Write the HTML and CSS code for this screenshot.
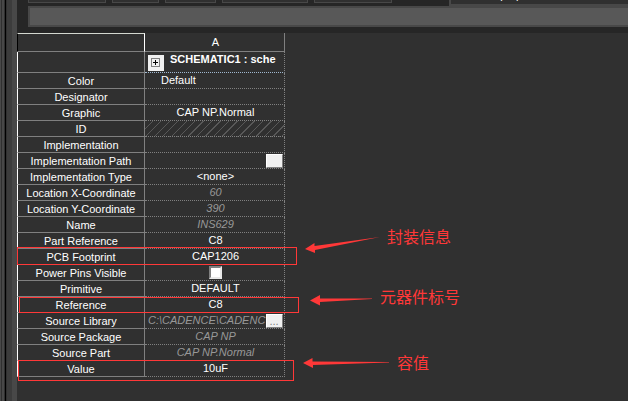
FILE: index.html
```html
<!DOCTYPE html>
<html lang="zh-CN">
<head>
<meta charset="utf-8">
<title>Property Editor</title>
<link rel="stylesheet" href="styles.css">
</head>
<body>
<div class="window">
  <div class="gutter"></div>
  <main class="editor">
    <header class="toolbar">
      <button class="tool tool-new" type="button" aria-label="New Property"></button>
      <button class="tool tool-apply" type="button" aria-label="Apply"></button>
      <button class="tool tool-display" type="button" aria-label="Display"></button>
      <button class="tool tool-delete" type="button" aria-label="Delete Property"></button>
      <button class="tool tool-pivot" type="button" aria-label="Pivot"></button>
      <select class="filter" aria-label="Filter by"><option>&lt; Current properties &gt;</option></select>
    </header>
    <input class="value-bar" type="text" aria-label="Property value">
    <section class="sheet">
      <table class="props">
        <thead>
          <tr class="letters"><td></td><th scope="col">A</th></tr>
          <tr class="title"><td></td><th scope="col"><div class="title-cell"><button class="expand" type="button" aria-label="Expand"><svg width="10" height="10" viewBox="0 0 10 10" shape-rendering="crispEdges"><path d="M.5 .5h8v8h-8z" fill="#f0f0f0" stroke="#808080"/><path d="M2 4.500h5M4.500 2v5" stroke="#000"/></svg></button><span>SCHEMATIC1 : sche</span></div></th></tr>
        </thead>
        <tbody>
          <tr><th scope="row">Color</th><td class="left">Default</td></tr>
          <tr><th scope="row">Designator</th><td></td></tr>
          <tr><th scope="row">Graphic</th><td>CAP NP.Normal</td></tr>
          <tr><th scope="row">ID</th><td class="hatched"></td></tr>
          <tr><th scope="row">Implementation</th><td></td></tr>
          <tr><th scope="row">Implementation Path</th><td><div class="browse-cell"><span></span><button class="browse" type="button" aria-label="Browse path"></button></div></td></tr>
          <tr><th scope="row">Implementation Type</th><td>&lt;none&gt;</td></tr>
          <tr><th scope="row">Location X-Coordinate</th><td class="locked">60</td></tr>
          <tr><th scope="row">Location Y-Coordinate</th><td class="locked">390</td></tr>
          <tr><th scope="row">Name</th><td class="locked">INS629</td></tr>
          <tr><th scope="row">Part Reference</th><td>C8</td></tr>
          <tr><th scope="row">PCB Footprint</th><td>CAP1206</td></tr>
          <tr><th scope="row"><label for="pins">Power Pins Visible</label></th><td><input class="check" id="pins" type="checkbox"></td></tr>
          <tr><th scope="row">Primitive</th><td>DEFAULT</td></tr>
          <tr><th scope="row">Reference</th><td>C8</td></tr>
          <tr><th scope="row">Source Library</th><td class="locked"><div class="browse-cell"><span>C:\CADENCE\CADENC</span><button class="browse" type="button" aria-label="Browse library">...</button></div></td></tr>
          <tr><th scope="row">Source Package</th><td class="locked">CAP NP</td></tr>
          <tr><th scope="row">Source Part</th><td class="locked">CAP NP.Normal</td></tr>
          <tr><th scope="row">Value</th><td>10uF</td></tr>
        </tbody>
      </table>
      <div class="mark mark-footprint"></div>
      <div class="mark mark-reference"></div>
      <div class="mark mark-value"></div>
      <svg class="arrows" width="120" height="140" viewBox="0 0 120 140" fill="#ff3838">
        <path d="M5 16L14.500 10V13L80 4L15 17V20Z"/>
        <path d="M10 67.500L20 62V65.500L72 65.500V66L20 69V72.500Z"/>
        <path d="M3 130L12.500 125V128.500L89 129V129.500L13 132V135Z"/>
      </svg>
      <span class="note note-footprint">封装信息</span>
      <span class="note note-reference">元器件标号</span>
      <span class="note note-value">容值</span>
    </section>
  </main>
</div>
</body>
</html>
```
FILE: styles.css
```css
* { box-sizing: border-box; }

body {
  margin: 0;
  background: #303030;
  color: #fff;
  font: 11px/15px "Liberation Sans", Arial, sans-serif;
}

button, input, select { font: inherit; margin: 0; padding: 0; border-radius: 0; }

.window { display: flex; min-height: 100vh; }

.gutter {
  flex: 0 0 17px;
  background: linear-gradient(90deg, #484848 0 1px, #303030 1px 2px, #484848 2px 4px, #303030 4px 5px, #000 5px 6px, #303030 6px 7px, #3c3c3c 7px 12px, #484848 12px 17px);
}

.editor { flex: 1; min-width: 0; display: flex; flex-direction: column; background: #262626; }

.toolbar {
  display: flex;
  align-items: flex-end;
  gap: 6px;
  height: 6px;
  padding-left: 11px;
  overflow: hidden;
}

.tool {
  flex: none;
  height: 22px;
  margin-bottom: 3px;
  border: 1px solid #484848;
  background: #303030;
}
.tool-new { width: 78px; }
.tool-apply { width: 47px; }
.tool-display { width: 51px; }
.tool-delete { width: 86px; }
.tool-pivot { width: 78px; }

.filter {
  flex: 1;
  height: 22px;
  margin-left: 51px;
  appearance: none;
  border: 2px solid #484848;
  border-right: 0;
  background: #303030;
  color: #fff;
}

.value-bar {
  height: 21px;
  margin-left: 11px;
  border: 2px solid #484848;
  border-right: 0;
  background: #585858;
  color: #fff;
}

.sheet { position: relative; flex: 1; margin-top: 6px; background: #303030; }

.props { border-spacing: 0; table-layout: fixed; width: 268px; }
.props th, .props td { height: 16px; padding: 0; font-weight: 400; text-align: center; white-space: nowrap; }
.props tr > :first-child {
  width: 128px;
  padding-top: 1px;
  line-height: 14px;
  border: solid #808080;
  border-width: 0 1px 1px 0;
  border-left: 1px solid #fff;
}
.props tr > :last-child { border: dotted #808080; border-width: 0 1px 1px 0; padding-left: 2px; }

.props .letters > * { height: 19px; }
.props .letters > :first-child { border-top: 1px solid #d4d8d0; border-left-color: #000; border-right-color: #fff; }
.props .letters > :last-child { border-style: solid; }
.props .title > * { height: 21px; }
.props .title > :last-child { padding-left: 0; border-bottom-color: #a0b8d0; font-weight: 700; }

.title-cell { display: flex; align-items: flex-start; gap: 6px; height: 20px; padding-left: 3px; overflow: hidden; }
.expand {
  display: grid;
  place-items: center;
  flex: none;
  width: 16px;
  height: 16px;
  margin-top: 3px;
  border: 0;
  background: #f0f0f0;
}

.props tr > .left { padding-left: 16px; text-align: left; }
.props .locked { color: #989898; font-style: italic; }
.hatched { background: repeating-linear-gradient(135deg, #303030 0 5px, #585858 5px 6px); }

.browse-cell { display: flex; align-items: center; height: 15px; }
.browse-cell span { flex: 1; min-width: 0; padding-left: 1px; text-align: left; }
.browse {
  flex: none;
  width: 17px;
  height: 14px;
  margin-right: 1px;
  border: 1px solid;
  border-color: #fff #808080 #808080 #fff;
  background: #f0f0f0;
  color: #808080;
  line-height: 12px;
}

.check {
  display: block;
  width: 13px;
  height: 13px;
  margin: 1px auto;
  appearance: none;
  border: 2px solid;
  border-color: #808080 #e8e8e8 #e8e8e8 #808080;
  background: #fff;
}

.mark { position: absolute; width: 280px; border: 1px solid #ff3838; }
.mark-footprint { left: 0; top: 214px; height: 18px; }
.mark-reference { left: 2px; top: 264px; height: 16px; }
.mark-value { left: 1px; top: 327px; width: 276px; height: 21px; }

.arrows { position: absolute; left: 283px; top: 200px; }

.note {
  position: absolute;
  color: #ff3838;
  font: 16px/20px "Noto Sans CJK SC", sans-serif;
}
.note-footprint { left: 370px; top: 193px; }
.note-reference { left: 363px; top: 253px; }
.note-value { left: 380px; top: 319px; }
```
